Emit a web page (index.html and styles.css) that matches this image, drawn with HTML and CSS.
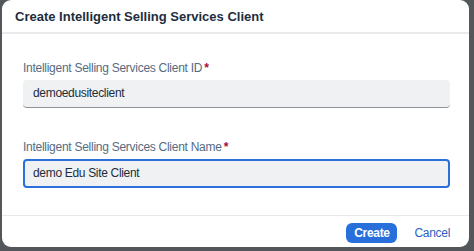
FILE: index.html
```html
<!DOCTYPE html>
<html>
<head>
<meta charset="utf-8">
<link rel="stylesheet" href="styles.css">
</head>
<body>
<div class="dialog">
  <header class="dialog-header">
    <h1 class="title">Create Intelligent Selling Services Client</h1>
  </header>
  <main class="dialog-content">
    <div class="field">
      <label class="label">Intelligent Selling Services Client ID<span class="req">*</span></label>
      <div class="input readonly">demoedusiteclient</div>
    </div>
    <div class="field">
      <label class="label">Intelligent Selling Services Client Name<span class="req">*</span></label>
      <div class="input focused">demo Edu Site Client</div>
    </div>
  </main>
  <footer class="dialog-footer">
    <button class="btn btn-primary">Create</button>
    <button class="btn btn-link">Cancel</button>
  </footer>
</div>
</body>
</html>
```
FILE: styles.css
```css
html, body {
  margin: 0;
  padding: 0;
}
body {
  width: 474px;
  height: 251px;
  background: #53575c;
  font-family: "Liberation Sans", Arial, sans-serif;
  color: #1d2d3e;
  overflow: hidden;
}
.dialog {
  margin-left: 2px;
  width: 467px;
  height: 247px;
  background: #ffffff;
  border-radius: 9px;
  display: flex;
  flex-direction: column;
  overflow: hidden;
}
.dialog-header {
  height: 34px;
  border-bottom: 2px solid #e8eaec;
  padding: 2px 13px 0;
  box-sizing: border-box;
  flex: none;
}
.title {
  margin: 0;
  font-size: 13px;
  line-height: 30px;
  font-weight: 700;
  color: #1d2d3e;
}
.dialog-content {
  flex: 1;
  padding: 26px 19px 0 21px;
  display: flex;
  flex-direction: column;
  gap: 31px;
  border-bottom: 1px solid #e6e8ea;
}
.field {
  display: flex;
  flex-direction: column;
  gap: 4px;
}
.label {
  font-size: 12px;
  line-height: 16px;
  letter-spacing: -0.27px;
  color: #556b82;
}
.req {
  color: #aa0a3c;
  font-weight: 700;
  margin-left: 2px;
}
.input {
  height: 28px;
  box-sizing: border-box;
  border-radius: 4px;
  background: #eff1f2;
  font-size: 12px;
  letter-spacing: -0.32px;
  color: #1d2d3e;
  padding-left: 10px;
}
.input.readonly {
  line-height: 27px;
  border-bottom: 1px solid #8e9499;
}
.input.focused {
  height: 29px;
  line-height: 25px;
  border: 2px solid #2a6fdb;
  padding-left: 8px;
}
.dialog-footer {
  height: 31px;
  flex: none;
  display: flex;
  align-items: flex-start;
  justify-content: flex-end;
  padding: 7px 19px 0 0;
  box-sizing: border-box;
  gap: 17px;
}
.btn {
  font-family: inherit;
  font-size: 12px;
  letter-spacing: -0.3px;
  border: none;
  cursor: pointer;
  padding: 0;
}
.btn-primary {
  background: #276fdb;
  color: #ffffff;
  font-weight: 700;
  height: 20px;
  width: 51px;
  border-radius: 6px;
}
.btn-link {
  background: transparent;
  color: #2b5fbd;
  height: 20px;
}
```
